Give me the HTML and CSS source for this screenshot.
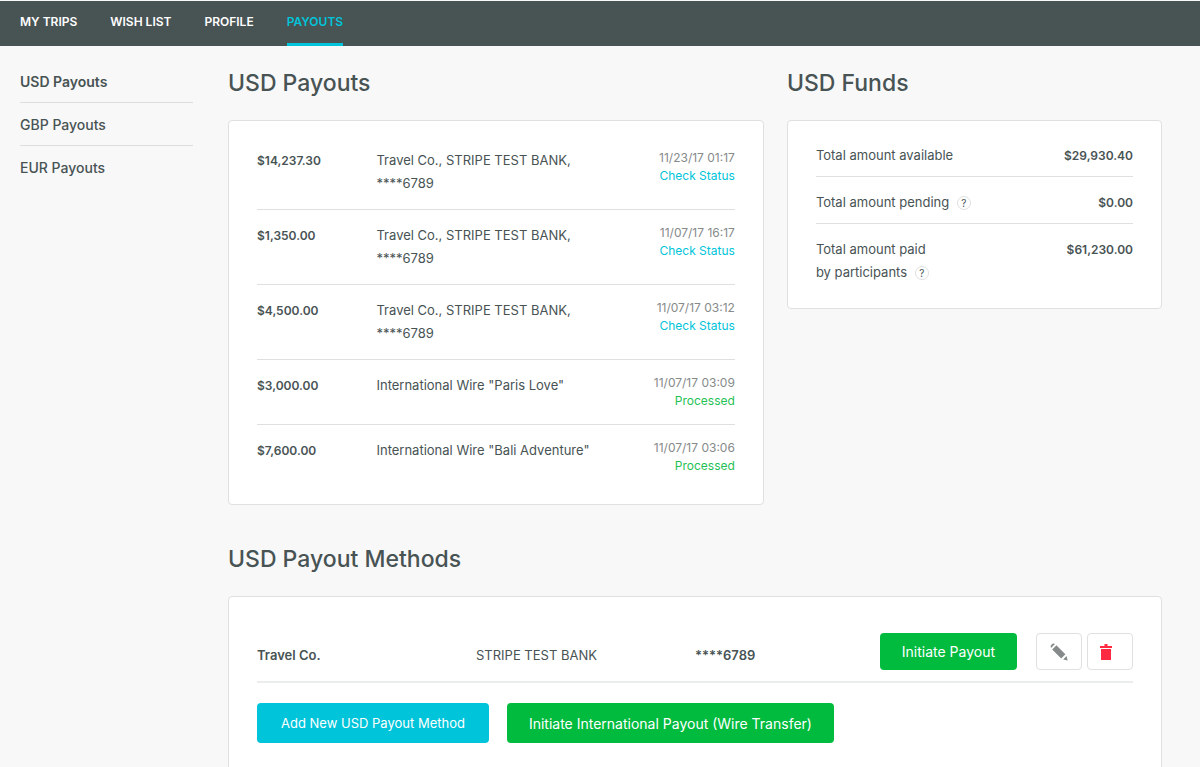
FILE: index.html
```html
<!DOCTYPE html>
<html lang="en">
<head>
    <meta charset="UTF-8">
    <meta name="viewport" content="width=device-width, initial-scale=1.0">
    <title>USD Payouts</title>
    <link rel="stylesheet" href="styles.css">
</head>
<body>
    <!-- Navigation -->
    <nav class="top-nav">
        <a href="#trips">MY TRIPS</a>
        <a href="#wish-list">WISH LIST</a>
        <a href="#profile">PROFILE</a>
        <a href="#payouts" class="active">PAYOUTS</a>
    </nav>

    <div class="page">
        <!-- Currency menu -->
        <aside class="sidebar">
            <a href="#usd" class="active">USD Payouts</a>
            <a href="#gbp">GBP Payouts</a>
            <a href="#eur">EUR Payouts</a>
        </aside>

        <main class="content">
            <div class="columns">
                <!-- Payouts -->
                <section>
                    <h2>USD Payouts</h2>
                    <div class="card payouts-card">
                        <table class="payouts">
                            <tr>
                                <td class="amount">$14,237.30</td>
                                <td>Travel Co., STRIPE TEST BANK,<br>****6789</td>
                                <td class="status"><time>11/23/17 01:17</time><a href="#status">Check Status</a></td>
                            </tr>
                            <tr>
                                <td class="amount">$1,350.00</td>
                                <td>Travel Co., STRIPE TEST BANK,<br>****6789</td>
                                <td class="status"><time>11/07/17 16:17</time><a href="#status">Check Status</a></td>
                            </tr>
                            <tr>
                                <td class="amount">$4,500.00</td>
                                <td>Travel Co., STRIPE TEST BANK,<br>****6789</td>
                                <td class="status"><time>11/07/17 03:12</time><a href="#status">Check Status</a></td>
                            </tr>
                            <tr>
                                <td class="amount">$3,000.00</td>
                                <td>International Wire "Paris Love"</td>
                                <td class="status"><time>11/07/17 03:09</time><span class="processed">Processed</span></td>
                            </tr>
                            <tr>
                                <td class="amount">$7,600.00</td>
                                <td>International Wire "Bali Adventure"</td>
                                <td class="status"><time>11/07/17 03:06</time><span class="processed">Processed</span></td>
                            </tr>
                        </table>
                    </div>
                </section>

                <!-- Funds -->
                <section>
                    <h2>USD Funds</h2>
                    <div class="card funds-card">
                        <table class="funds">
                            <tr>
                                <th scope="row">Total amount available</th>
                                <td>$29,930.40</td>
                            </tr>
                            <tr>
                                <th scope="row">Total amount pending <button type="button" class="help">?</button></th>
                                <td>$0.00</td>
                            </tr>
                            <tr>
                                <th scope="row">Total amount paid<br>by participants <button type="button" class="help">?</button></th>
                                <td>$61,230.00</td>
                            </tr>
                        </table>
                    </div>
                </section>
            </div>

            <!-- Payout methods -->
            <section>
                <h2>USD Payout Methods</h2>
                <div class="card methods-card">
                    <table class="methods">
                        <tr>
                            <td class="name">Travel Co.</td>
                            <td>STRIPE TEST BANK</td>
                            <td class="number">****6789</td>
                            <td class="actions">
                                <div class="action-list">
                                    <button type="button" class="btn btn-green btn-small">Initiate Payout</button>
                                    <button type="button" class="btn-icon" aria-label="Edit">
                                        <svg width="18" height="18" viewBox="0 0 18 18" fill="#868a8a">
                                            <path d="M1 5L5 1L3.6 0.6Q2.8 0.4 2 1.2L1.2 2Q0.4 2.8 0.7 3.8Z"/>
                                            <path d="M2.2 6.4L6.4 2.2L15.4 11.2L11.2 15.4Z"/>
                                            <path d="M16.6 13L17.6 17.4L13.2 16.4Z"/>
                                        </svg>
                                    </button>
                                    <button type="button" class="btn-icon btn-delete" aria-label="Delete">
                                        <svg width="12" height="16" viewBox="0 0 12 16" fill="#ff2941">
                                            <path d="M0 2H4.5V0H7.5V2H12V4H0Z"/>
                                            <path d="M1 5H11V16H1Z"/>
                                        </svg>
                                    </button>
                                </div>
                            </td>
                        </tr>
                    </table>
                    <div class="buttons">
                        <button type="button" class="btn btn-blue">Add New USD Payout Method</button>
                        <button type="button" class="btn btn-green">Initiate International Payout (Wire Transfer)</button>
                    </div>
                </div>
            </section>
        </main>
    </div>
</body>
</html>
```
FILE: styles.css
```css
* {
    box-sizing: border-box;
}

body {
    font-family: Inter, sans-serif;
    font-size: 13px;
    line-height: 23px;
    margin: 0;
    background-color: #f8f8f8;
    color: #485354;
}

a {
    color: #00c4d9;
    text-decoration: none;
}

button {
    font-family: inherit;
    cursor: pointer;
}

/* Navigation */
.top-nav {
    display: flex;
    gap: 33px;
    height: 46px;
    padding: 0 20px;
    background-color: #485354;
    border-top: 1px solid #f8f8f8;
}

.top-nav a {
    color: white;
    font-size: 12px;
    font-weight: 600;
    line-height: 42px;
    border-bottom: 3px solid transparent;
}

.top-nav a.active {
    color: #00c4d9;
    border-bottom-color: #00c4d9;
}

.page {
    display: flex;
    gap: 35px;
    padding: 14px 38px 40px 20px;
}

/* Sidebar */
.sidebar {
    flex: 0 0 173px;
}

.sidebar a {
    display: block;
    padding: 10px 0 9px;
    color: #485354;
    font-size: 14px;
    font-weight: 500;
    border-bottom: 1px solid #dcdddd;
}

.sidebar a.active {
    font-weight: 600;
}

.sidebar a:last-child {
    border-bottom: none;
}

.content {
    flex: 1;
    padding-top: 7px;
}

.columns {
    display: grid;
    grid-template-columns: 10fr 7fr;
    gap: 23px;
    align-items: start;
    margin-bottom: 38px;
}

h2 {
    margin: 0 0 21px;
    font-size: 23px;
    font-weight: 500;
    line-height: 32px;
}

.card {
    background-color: white;
    border: 1px solid #dfe0e0;
    border-radius: 4px;
    padding: 0 28px;
}

table {
    width: 100%;
    border-collapse: collapse;
}

td, th {
    padding: 14px 0;
    text-align: left;
    vertical-align: top;
}

tr + tr {
    border-top: 1px solid #dfe0e0;
}

/* Payouts */
.payouts-card {
    padding-top: 14px;
    padding-bottom: 15px;
}

.payouts .amount {
    width: 25%;
    font-size: 12px;
    font-weight: 600;
}

.payouts .status {
    font-size: 12px;
    line-height: 18px;
    text-align: right;
}

.status time, .status a, .status span {
    display: block;
}

.status time {
    color: #868a8a;
}

.status .processed {
    color: #1fc155;
}

/* Funds */
.funds-card {
    padding-top: 9px;
    padding-bottom: 15px;
}

.funds td, .funds th {
    padding-bottom: 9px;
}

.funds th {
    font-weight: 400;
}

.funds td {
    font-size: 12px;
    font-weight: 600;
    text-align: right;
}

.help {
    width: 14px;
    height: 14px;
    margin-left: 4px;
    padding: 0;
    color: #485354;
    background-color: white;
    font-size: 10px;
    line-height: 12px;
    border: 1px solid #dfe0e0;
    border-radius: 50%;
}

/* Payout methods */
.methods-card {
    padding-top: 36px;
    padding-bottom: 40px;
}

.methods {
    table-layout: fixed;
    border-bottom: 2px solid #ebecec;
}

.methods td {
    width: 25%;
    padding: 11px 0;
}

.methods td.actions {
    padding: 0 0 11px;
}

.methods .name, .methods .number {
    font-weight: 600;
}

.action-list {
    display: flex;
    justify-content: flex-end;
    gap: 5px;
}

.buttons {
    display: flex;
    gap: 18px;
    padding-top: 20px;
}

.btn {
    height: 40px;
    padding: 0 22px;
    color: white;
    font-size: 14px;
    white-space: nowrap;
    border: none;
    border-radius: 4px;
}

.btn-small {
    height: 37px;
    margin-right: 14px;
}

.btn-green {
    background-color: #00bb3e;
}

.btn-blue {
    padding: 0 24px;
    background-color: #00c4d9;
    font-size: 13px;
}

.btn-icon {
    display: flex;
    flex: none;
    align-items: center;
    justify-content: center;
    width: 46px;
    height: 37px;
    padding: 0;
    background-color: white;
    border: 1px solid #dfe0e0;
    border-radius: 4px;
}

.btn-delete {
    padding-right: 8px;
}
```
